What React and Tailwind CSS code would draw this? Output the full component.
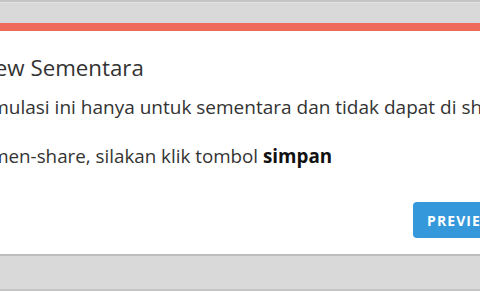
export default function App() {
  return (
    <div className="w-[480px] h-[291px] overflow-hidden bg-[#d9d9d9] flex flex-col">
      <div className="h-[2px] bg-[#c4c4c4]" />
      <div className="h-[1px] bg-[#e4e4e4]" />
      <div className="h-[20px] bg-[#d9d9d9]" />
      <div className="h-[8px] bg-[#ee6a5b]" />
      <div className="h-[223px] bg-white flex flex-col overflow-hidden font-['Open_Sans',sans-serif] text-[#333333]">
        <div className="ml-[-57px] w-[700px] pt-[21px] text-[22.3px] leading-[32px] font-normal">Preview Sementara</div>
        <div className="ml-[-24px] w-[700px] mt-[11px] text-[19px] leading-[24px]">Simulasi ini hanya untuk sementara dan tidak dapat di share</div>
        <div className="ml-[-67px] w-[700px] mt-[25px] text-[18.8px] leading-[24px]">Untuk men-share, silakan klik tombol <b className="font-bold text-[#111111]">simpan</b></div>
        <div className="flex justify-start mt-[34px] pl-[413px]">
          <div className="h-[36px] rounded-[4px] bg-[#3498db] pl-[14px] pr-[14px] flex items-center text-white font-bold text-[14px] tracking-[1.1px] whitespace-nowrap">PREVIEW</div>
        </div>
      </div>
      <div className="h-[2px] bg-[#bdbdbd]" />
      <div className="flex-1 bg-[#d9d9d9]" />
      <div className="h-[2px] bg-[#c4c4c4]" />
    </div>
  );
}
